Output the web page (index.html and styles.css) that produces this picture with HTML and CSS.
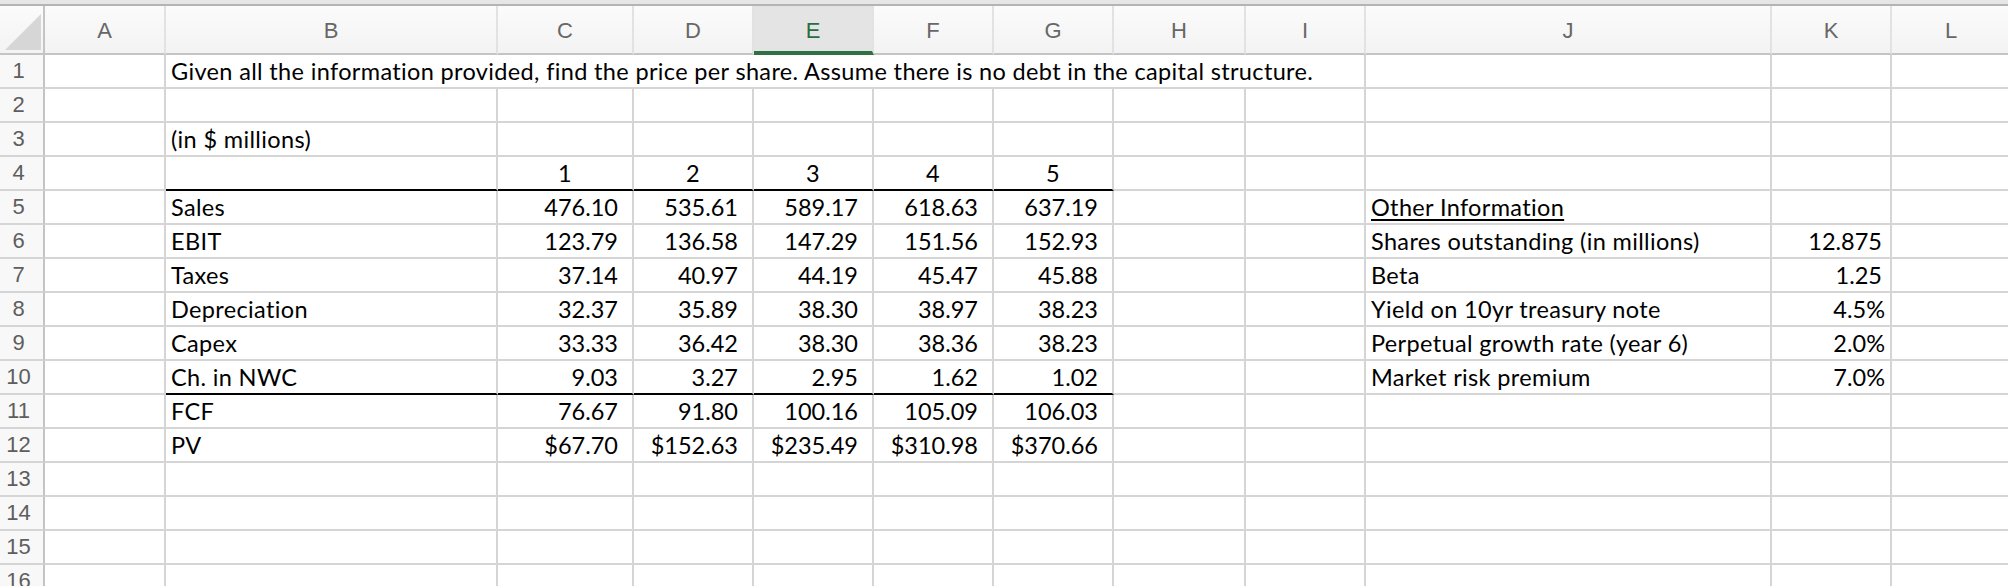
FILE: index.html
```html
<!DOCTYPE html>
<html lang="en">

<head>
    <meta charset="UTF-8">
    <title>Price per share</title>
    <link rel="stylesheet" href="styles.css">
</head>

<body>
    <div class="topbar"></div>
    <table class="grid">
        <colgroup>
            <col class="w-hdr">
            <col class="w-a">
            <col class="w-b">
            <col class="w-c">
            <col class="w-std">
            <col class="w-std">
            <col class="w-std">
            <col class="w-std">
            <col class="w-h">
            <col class="w-std">
            <col class="w-j">
            <col class="w-std">
            <col class="w-std">
        </colgroup>
        <thead>
            <tr>
                <th class="corner">
                    <svg class="corner-tri" width="36" height="36" viewBox="0 0 36 36">
                        <polygon points="36,0 36,36 0,36" fill="#d6d6d6" />
                    </svg>
                </th>
                <th>A</th>
                <th>B</th>
                <th>C</th>
                <th>D</th>
                <th class="selected">E</th>
                <th>F</th>
                <th>G</th>
                <th>H</th>
                <th>I</th>
                <th>J</th>
                <th>K</th>
                <th>L</th>
            </tr>
        </thead>
        <tbody>
            <tr>
                <td class="row-hdr">1</td>
                <td></td>
                <td colspan="8" class="spill">Given all the information provided, find the price per share. Assume there is no debt in the capital structure.</td>
                <td></td>
                <td></td>
                <td></td>
            </tr>
            <tr>
                <td class="row-hdr">2</td>
                <td></td><td></td><td></td><td></td><td></td><td></td><td></td><td></td><td></td><td></td><td></td><td></td>
            </tr>
            <tr>
                <td class="row-hdr">3</td>
                <td></td>
                <td>(in $ millions)</td>
                <td></td><td></td><td></td><td></td><td></td><td></td><td></td><td></td><td></td><td></td>
            </tr>
            <tr>
                <td class="row-hdr">4</td>
                <td></td>
                <td class="rule"></td>
                <td class="ctr rule">1</td>
                <td class="ctr rule">2</td>
                <td class="ctr rule">3</td>
                <td class="ctr rule">4</td>
                <td class="ctr rule">5</td>
                <td></td><td></td><td></td><td></td><td></td>
            </tr>
            <tr>
                <td class="row-hdr">5</td>
                <td></td>
                <td>Sales</td>
                <td class="num">476.10</td>
                <td class="num">535.61</td>
                <td class="num">589.17</td>
                <td class="num">618.63</td>
                <td class="num">637.19</td>
                <td></td><td></td>
                <td><span class="title-u">Other Information</span></td>
                <td></td><td></td>
            </tr>
            <tr>
                <td class="row-hdr">6</td>
                <td></td>
                <td>EBIT</td>
                <td class="num">123.79</td>
                <td class="num">136.58</td>
                <td class="num">147.29</td>
                <td class="num">151.56</td>
                <td class="num">152.93</td>
                <td></td><td></td>
                <td>Shares outstanding (in millions)</td>
                <td class="val">12.875</td>
                <td></td>
            </tr>
            <tr>
                <td class="row-hdr">7</td>
                <td></td>
                <td>Taxes</td>
                <td class="num">37.14</td>
                <td class="num">40.97</td>
                <td class="num">44.19</td>
                <td class="num">45.47</td>
                <td class="num">45.88</td>
                <td></td><td></td>
                <td>Beta</td>
                <td class="val">1.25</td>
                <td></td>
            </tr>
            <tr>
                <td class="row-hdr">8</td>
                <td></td>
                <td>Depreciation</td>
                <td class="num">32.37</td>
                <td class="num">35.89</td>
                <td class="num">38.30</td>
                <td class="num">38.97</td>
                <td class="num">38.23</td>
                <td></td><td></td>
                <td>Yield on 10yr treasury note</td>
                <td class="val pct">4.5%</td>
                <td></td>
            </tr>
            <tr>
                <td class="row-hdr">9</td>
                <td></td>
                <td>Capex</td>
                <td class="num">33.33</td>
                <td class="num">36.42</td>
                <td class="num">38.30</td>
                <td class="num">38.36</td>
                <td class="num">38.23</td>
                <td></td><td></td>
                <td>Perpetual growth rate (year 6)</td>
                <td class="val pct">2.0%</td>
                <td></td>
            </tr>
            <tr>
                <td class="row-hdr">10</td>
                <td></td>
                <td class="rule">Ch. in NWC</td>
                <td class="num rule">9.03</td>
                <td class="num rule">3.27</td>
                <td class="num rule">2.95</td>
                <td class="num rule">1.62</td>
                <td class="num rule">1.02</td>
                <td></td><td></td>
                <td>Market risk premium</td>
                <td class="val pct">7.0%</td>
                <td></td>
            </tr>
            <tr>
                <td class="row-hdr">11</td>
                <td></td>
                <td>FCF</td>
                <td class="num">76.67</td>
                <td class="num">91.80</td>
                <td class="num">100.16</td>
                <td class="num">105.09</td>
                <td class="num">106.03</td>
                <td></td><td></td><td></td><td></td><td></td>
            </tr>
            <tr>
                <td class="row-hdr">12</td>
                <td></td>
                <td>PV</td>
                <td class="num">$67.70</td>
                <td class="num">$152.63</td>
                <td class="num">$235.49</td>
                <td class="num">$310.98</td>
                <td class="num">$370.66</td>
                <td></td><td></td><td></td><td></td><td></td>
            </tr>
            <tr>
                <td class="row-hdr">13</td>
                <td></td><td></td><td></td><td></td><td></td><td></td><td></td><td></td><td></td><td></td><td></td><td></td>
            </tr>
            <tr>
                <td class="row-hdr">14</td>
                <td></td><td></td><td></td><td></td><td></td><td></td><td></td><td></td><td></td><td></td><td></td><td></td>
            </tr>
            <tr>
                <td class="row-hdr">15</td>
                <td></td><td></td><td></td><td></td><td></td><td></td><td></td><td></td><td></td><td></td><td></td><td></td>
            </tr>
            <tr>
                <td class="row-hdr">16</td>
                <td></td><td></td><td></td><td></td><td></td><td></td><td></td><td></td><td></td><td></td><td></td><td></td>
            </tr>
        </tbody>
    </table>
</body>

</html>
```

FILE: styles.css
```css
body {
    margin: 0;
    width: 2008px;
    height: 586px;
    overflow: hidden;
    background: #ffffff;
    font-family: 'Lato', 'Liberation Sans', sans-serif;
}

.topbar {
    height: 4px;
    background: #e6e6e6;
    border-bottom: 2px solid #b4b4b4;
}

.grid {
    border-collapse: separate;
    border-spacing: 0;
    table-layout: fixed;
    width: 2012px;
}

.w-hdr { width: 45px; }
.w-a { width: 121px; }
.w-b { width: 332px; }
.w-c { width: 136px; }
.w-std { width: 120px; }
.w-h { width: 132px; }
.w-j { width: 406px; }

/* column headers */
th {
    box-sizing: border-box;
    height: 49px;
    padding: 0;
    background: linear-gradient(#fbfbfb, #f3f3f3);
    border-right: 2px solid #e2e2e2;
    border-bottom: 2px solid #c4c4c4;
    font-family: 'Liberation Sans', sans-serif;
    font-weight: normal;
    font-size: 22px;
    color: #676767;
    text-align: center;
    vertical-align: middle;
    padding-top: 2px;
}

th.corner {
    position: relative;
    border-right-color: #c4c4c4;
}

.corner-tri {
    position: absolute;
    left: 5px;
    top: 8px;
}

th.selected {
    background: #e4e4e4;
    color: #2a6e3f;
    border-bottom: 4px solid #2f7145;
    padding-top: 4px;
}

/* cells */
td {
    box-sizing: border-box;
    height: 34px;
    padding: 0 5px;
    border-right: 2px solid #d5d5d5;
    border-bottom: 2px solid #d5d5d5;
    font-size: 23.5px;
    letter-spacing: 0.35px;
    line-height: 32px;
    color: #000000;
    white-space: nowrap;
    vertical-align: middle;
    overflow: hidden;
}

td.row-hdr {
    background: #f8f8f8;
    border-right-color: #c4c4c4;
    font-family: 'Liberation Sans', sans-serif;
    font-size: 22px;
    letter-spacing: 0;
    color: #5e5e5e;
    text-align: center;
    padding: 0 6px 0 0;
}

td.spill {
    overflow: visible;
}

.ctr {
    text-align: center;
}

.num {
    text-align: right;
    padding-right: 14px;
    letter-spacing: 0;
}

.val {
    text-align: right;
    padding-right: 8px;
    letter-spacing: 0;
}

.val.pct {
    padding-right: 5px;
}

td.rule {
    border-bottom-color: #000000;
}

.title-u {
    text-decoration: underline;
    text-decoration-thickness: 2px;
    text-underline-offset: 3px;
}
```
